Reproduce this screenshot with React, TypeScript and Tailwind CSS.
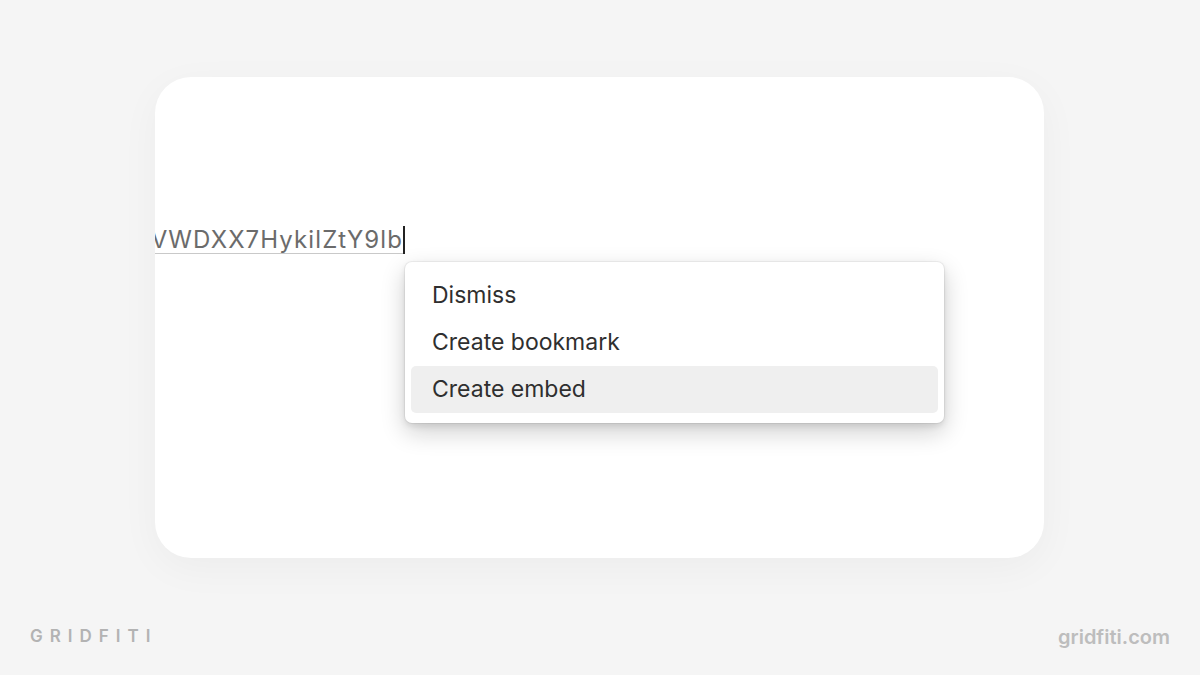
import React from 'react';

const menuItems = ['Dismiss', 'Create bookmark', 'Create embed'];

export default function App() {
  return (
    <div
      className="w-[1200px] h-[675px] bg-[#f5f5f5] flex flex-col"
      style={{ fontFamily: 'Inter, "Noto Sans", sans-serif' }}
    >
      <div className="pt-[77px] pl-[155px]">
        {/* Card */}
        <div className="w-[889px] h-[481px] bg-white rounded-[36px] overflow-hidden shadow-[0_10px_40px_rgba(0,0,0,0.04)] pt-[149px]">
          {/* Pasted link line */}
          <div className="w-[250px] h-[28px] flex justify-end items-end">
            <div className="flex items-end whitespace-nowrap">
              <span className="text-[24px] leading-[27px] text-[#6b6b6b] border-b border-[#c9c9c9] tracking-[1.1px]">
                VWDXX7HykilZtY9lb
              </span>
              <span className="w-[2px] h-[28px] bg-[#222]"></span>
            </div>
          </div>

          {/* Paste menu */}
          <div className="ml-[250px] mt-[8px] w-[539px] bg-white rounded-[7px] shadow-[0_0_0_1px_rgba(15,15,15,0.05),0_3px_6px_rgba(15,15,15,0.1),0_9px_24px_rgba(15,15,15,0.2)] p-[6px] pt-[10px] pb-[10px]">
            {menuItems.map((item, i) => (
              <div
                key={item}
                className={`h-[47px] flex items-center px-[21px] rounded-[5px] text-[23px] text-[#2f2f2f] ${
                  i === 2 ? 'bg-[#efefef]' : ''
                }`}
              >
                {item}
              </div>
            ))}
          </div>
        </div>
      </div>

      {/* Footer */}
      <div className="mt-auto h-[76px] flex items-center justify-between pl-[30px] pr-[30px]">
        <div className="text-[17px] font-semibold tracking-[7px] text-[#b3b3b3]">GRIDFITI</div>
        <div className="text-[20px] font-semibold text-[#bdbdbd]">gridfiti.com</div>
      </div>
    </div>
  );
}
